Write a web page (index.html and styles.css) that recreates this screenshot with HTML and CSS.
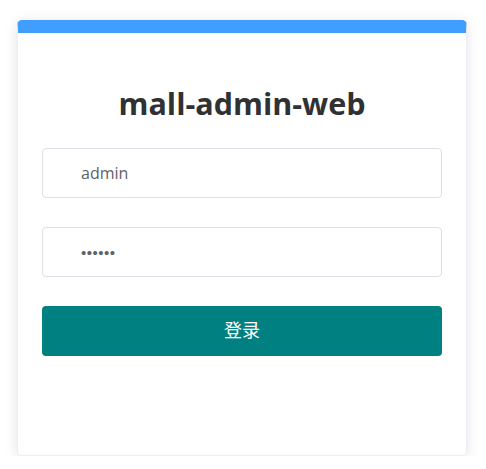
FILE: index.html
```html
<!DOCTYPE html>
<html>
<head>
<meta charset="utf-8">
<link rel="stylesheet" href="styles.css">
</head>
<body>
<div class="card">
  <h2 class="title">mall-admin-web</h2>
  <div class="field"><span class="value">admin</span></div>
  <div class="field"><span class="value dots">••••••</span></div>
  <button class="btn">登录</button>
</div>
</body>
</html>
```
FILE: styles.css
```css
html, body { margin: 0; padding: 0; background: #fff; }
body { font-family: "Open Sans", "Noto Sans CJK SC", sans-serif; }
.card {
  box-sizing: border-box;
  width: 450px;
  height: 436px;
  margin: 20px 0 0 17px;
  background: #fff;
  border: 1px solid #ebeef5;
  border-top: 13px solid #409eff;
  border-radius: 5px;
  box-shadow: 0 2px 14px 0 rgba(0,0,0,0.11);
  padding: 50px 24px 0;
}
.title {
  margin: 0 0 25px;
  height: 40px;
  line-height: 40px;
  text-align: center;
  font-size: 30.5px;
  font-weight: 700;
  color: #303133;
}
.field {
  box-sizing: border-box;
  height: 50px;
  border: 1px solid #dcdfe6;
  border-radius: 4px;
  margin-bottom: 29px;
  display: flex;
  align-items: center;
  padding-left: 38px;
}
.value { font-size: 16px; color: #606266; }
.dots { font-size: 15px; letter-spacing: 0.5px; font-family: "Liberation Sans", sans-serif; }
.btn {
  display: block;
  width: 100%;
  height: 50px;
  border: none;
  border-radius: 4px;
  background: #008080;
  color: #fff;
  font-family: "Noto Sans CJK SC", sans-serif;
  font-size: 18px;
  line-height: 24px;
  padding: 0 0 4px;
  margin-top: 1px;
}
```
